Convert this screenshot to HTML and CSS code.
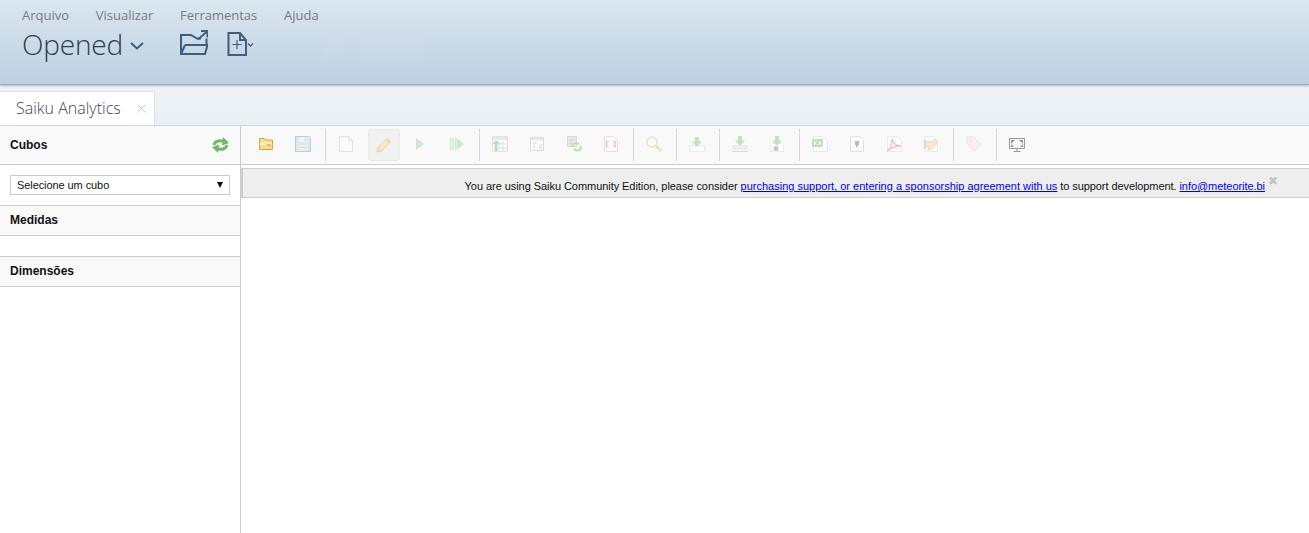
FILE: index.html
```html
<!DOCTYPE html>
<html lang="pt">
<head>
<meta charset="utf-8">
<title>Saiku Analytics</title>
<link rel="stylesheet" href="styles.css">
</head>
<body>
<header class="header">
  <nav class="menu">
    <span class="menu-item">Arquivo</span>
    <span class="menu-item">Visualizar</span>
    <span class="menu-item">Ferramentas</span>
    <span class="menu-item">Ajuda</span>
  </nav>
  <div class="title-row">
    <span class="doc-title">Opened</span>
    <svg class="chev" width="14" height="8" viewBox="0 0 14 8"><path d="M1 1l6 5.500L13 1" fill="none" stroke="#3d5f7d" stroke-width="2"/></svg>
    <svg class="open-icon" width="28" height="25" viewBox="0 0 28 25"><path d="M1 24V5h10l6 3.500h4M26.500 8.500V15M5 15h22.500L25 24H1L5 15" fill="none" stroke="#3d5f7d" stroke-width="2"/><path d="M18 9.500L27 1.500M21 1h6.500v6.500" fill="none" stroke="#3d5f7d" stroke-width="2"/></svg>
    <svg class="new-icon" width="27" height="24" viewBox="0 0 27 24"><path d="M1.500 1H13l6 7v15H1.500zM13 1v7h6" fill="none" stroke="#3d5f7d" stroke-width="2"/><path d="M5.500 12.500h9M10 8v9" fill="none" stroke="#3d5f7d" stroke-width="1.200"/><path d="M21 11.500l2.500 2.500 2.500-2.500" fill="none" stroke="#3d5f7d" stroke-width="1.300"/></svg>
  </div>
  <svg class="ghost" width="110" height="30" viewBox="0 0 110 30"><path d="M0 30L18 4l10 8-16 18zM44 6h62v24H44z" fill="#fff"/></svg>
</header>
<div class="tabs">
  <div class="tab"><span class="tab-label">Saiku Analytics</span><svg width="9" height="9" viewBox="0 0 9 9"><path d="M.500.500l8 8M8.500.500l-8 8" stroke="#c8ccd0"/></svg></div>
</div>
<main class="main">
  <aside class="sidebar">
    <div class="side-head cubes-head">
      <span>Cubos</span>
      <svg class="refresh" width="17" height="16" viewBox="0 0 17 16"><path d="M2 8C3 3.500 8 3 12 4.500" fill="none" stroke="#72b86c" stroke-width="3"/><path d="M11 0L17 6 10 8.500z" fill="#72b86c"/><g transform="rotate(180 8.500 8)"><path d="M2 8C3 3.500 8 3 12 4.500" fill="none" stroke="#72b86c" stroke-width="3"/><path d="M11 0L17 6 10 8.500z" fill="#72b86c"/></g></svg>
    </div>
    <div class="cube-box">
      <div class="cube-select"><span>Selecione um cubo</span><i class="cube-arrow"></i></div>
    </div>
    <div class="side-head"><span class="side-title">Medidas</span></div>
    <div class="side-gap"></div>
    <div class="side-head"><span class="side-title">Dimensões</span></div>
  </aside>
  <section class="workspace">
    <div class="toolbar">
      <span class="btn live"><svg width="14" height="12" viewBox="0 0 14 12"><path d="M.500 11.500V.500h5l1.500 1.500h6.500v9.500z" fill="#f6dc8c" stroke="#d8a544"/><path d="M1 4.500h12V7H1z" fill="#fff3c4"/><path d="M8 6h4v2H8z" fill="#e7bb55"/></svg></span>
      <span class="btn dim"><svg width="16" height="16" viewBox="0 0 16 16"><path d="M.500.500h13l2 2v13H.500z" fill="#c9d6ee" stroke="#7e9ccd"/><path d="M4 1h8v5H4z" fill="#eef2fa"/><path d="M9.500 2h1.500v3H9.500z" fill="#9db4da"/><path d="M3 9h10v6H3z" fill="#e2ebc8"/><path d="M4 11h8v1H4z" fill="#b8c8a0"/></svg></span>
      <i class="sep"></i>
      <span class="btn faint"><svg width="14" height="16" viewBox="0 0 14 16"><path d="M.500.500h9l4 4v11H.500zM9.500.500v4h4" fill="#fff" stroke="#bbb"/></svg></span>
      <span class="btn active"><svg width="16" height="16" viewBox="0 0 16 16"><path d="M1 15l1.200-4.500L11 1.500 14.500 5l-9 9z" fill="#f8e8b4" stroke="#e3c49a"/><path d="M11 1.500L14.500 5l-1.500 1.500L9.500 3z" fill="#f0c9a0"/><path d="M1 15l1.200-4.500 3.300 3.500z" fill="#eccfb0"/></svg></span>
      <span class="btn dim"><svg width="8" height="12" viewBox="0 0 8 12"><path d="M0 0l8 6-8 6z" fill="#a9dba4"/></svg></span>
      <span class="btn dim"><svg width="14" height="12" viewBox="0 0 14 12"><path d="M0 0h1.500v12H0zM2.500 0H4v12H2.500zM5 0h1.500v12H5zM7 0l7 6-7 6z" fill="#a9dba4"/></svg></span>
      <i class="sep"></i>
      <span class="btn dim"><svg width="16" height="16" viewBox="0 0 16 16"><path d="M.500.500h15v15H.500z" fill="#fff" stroke="#c8c8c8"/><path d="M1 1h14v3H1z" fill="#d8d8d8"/><path d="M7 5v10M11 5v10M7 8h8M7 12h8" fill="none" stroke="#ccc"/><path d="M4 15V7" fill="none" stroke="#7dc87a" stroke-width="3"/><path d="M0 8l4-4 4 4z" fill="#7dc87a"/></svg></span>
      <span class="btn faint"><svg width="14" height="14" viewBox="0 0 14 14"><path d="M.500.500h13v13H.500z" fill="#fff" stroke="#aaa"/><path d="M1 1h12v2.500H1z" fill="#ccc"/><path d="M3 6h4M4 6v6M9 7l3 5M12 7l-3 5" stroke="#aaa" fill="none"/></svg></span>
      <span class="btn dim"><svg width="15" height="16" viewBox="0 0 15 16"><path d="M.500.500h9v10h-9z" fill="#ddd" stroke="#bbb"/><path d="M2 4h6M2 7h4" stroke="#aaa"/><path d="M5 11a4 4 0 0 1 7-2.500M14 10a4 4 0 0 1-7 3" fill="none" stroke="#7dc87a" stroke-width="2"/></svg></span>
      <span class="btn faint"><svg width="14" height="16" viewBox="0 0 14 16"><path d="M.500.500h9l4 4v11H.500z" fill="#fff" stroke="#bbb"/><path d="M4.500 5.500H2.500v5h2M9 5.500h2v5H9" fill="none" stroke="#e66" stroke-width="1.500"/></svg></span>
      <i class="sep"></i>
      <span class="btn dim"><svg width="16" height="16" viewBox="0 0 16 16"><circle cx="6" cy="6" r="5" fill="#fdf9ee" stroke="#e0c8a8" stroke-width="1.500"/><path d="M10 10l5 5" stroke="#d8c4a8" stroke-width="2.500"/></svg></span>
      <i class="sep"></i>
      <span class="btn dim"><svg width="16" height="15" viewBox="0 0 16 15"><path d="M.500 8.500h15v6H.500z" fill="#fff" stroke="#ddd"/><path d="M6 0h4v4.500h3L8 10 3 4.500h3z" fill="#8ccf87"/></svg></span>
      <i class="sep"></i>
      <span class="btn dim"><svg width="16" height="16" viewBox="0 0 16 16"><path d="M0 15.500h16" stroke="#bbb"/><path d="M1 10h14v3H1z" fill="#ececec" stroke="#ccc"/><path d="M6 0h4v4.500h3L8 10 3 4.500h3z" fill="#8ccf87"/></svg></span>
      <span class="btn dim"><svg width="14" height="16" viewBox="0 0 14 16"><path d="M.500 9.500l2-2h9l2 2v6H.500z" fill="#fff" stroke="#ddd"/><path d="M5 0h4v4.500h3L7 10 2 4.500h3z" fill="#8ccf87"/><circle cx="6" cy="12.500" r="2.500" fill="#999"/></svg></span>
      <i class="sep"></i>
      <span class="btn dim"><svg width="16" height="16" viewBox="0 0 16 16"><path d="M1.500.500h10l4 4v11h-14z" fill="#fff" stroke="#ddd"/><path d="M0 3h11v8H0z" fill="#8bc48b"/><path d="M2 5h7v4H2z" fill="#dcefdc"/><path d="M3.500 5l4 4M7.500 5l-4 4" stroke="#6aa86a"/></svg></span>
      <span class="btn faint"><svg width="14" height="16" viewBox="0 0 14 16"><path d="M.500.500h9l4 4v11H.500z" fill="#fff" stroke="#bbb"/><path d="M5 5h4v3.500L6 12v-3H5z" fill="#555"/></svg></span>
      <span class="btn dim"><svg width="16" height="16" viewBox="0 0 16 16"><path d="M1.500.500h10l4 4v11h-14z" fill="#fff" stroke="#ddd"/><path d="M1 15c3-1.500 5-6 5-12 1 4 4 7 9 7-5 0-10 2-14 5z" fill="none" stroke="#e88" stroke-width="1.300"/></svg></span>
      <span class="btn dim"><svg width="14" height="16" viewBox="0 0 14 16"><path d="M.500.500h9l4 4v11H.500z" fill="#fff" stroke="#ddd"/><path d="M1 4v9" stroke="#f0a090" stroke-width="2"/><path d="M1 6l7 0M1 10h4" stroke="#f0a090" stroke-width="1.500"/><path d="M4 14l1-4 6-7 3 3-6 7z" fill="#f4dc90" stroke="#e6c08a"/></svg></span>
      <i class="sep"></i>
      <span class="btn dim"><svg width="16" height="16" viewBox="0 0 16 16"><path d="M1 1h6.500l7.500 7.500L8.500 15 1 7.500z" fill="#fbe8ea" stroke="#e8c4c8"/><circle cx="4.500" cy="4.500" r="1.200" fill="#fff" stroke="#e8c4c8"/></svg></span>
      <i class="sep"></i>
      <span class="btn monitor"><svg width="16" height="14" viewBox="0 0 16 14"><path d="M.500.500h15v10H.500z" fill="#f4f4f4" stroke="#999"/><path d="M2 2h4L2 6zM14 2v4l-4-4zM2 9V6l3 3zM14 9h-3l3-3z" fill="#999"/><path d="M8 11v2M4.500 13.500h7" stroke="#999"/></svg></span>
    </div>
    <div class="notice"><span class="notice-lead">You are using Saiku Community Edition, please consider </span><a href="#">purchasing support, or entering a sponsorship agreement with us</a><span class="notice-mid"> to support development. </span><a class="notice-mail" href="#">info@meteorite.bi</a><span class="notice-close">✖</span></div>
  </section>
</main>
</body>
</html>
```
FILE: styles.css
```css
* { box-sizing: border-box; }
html, body { margin: 0; height: 533px; overflow: hidden; background: #fff; }
body { font-family: "Liberation Sans", Arial, sans-serif; color: #111; }

.header { height: 85px; padding: 7px 0 0 22px; background: linear-gradient(#dbe6ef, #bdd0e2); border-bottom: 1px solid #9eacba; box-shadow: 0 1px 2px rgba(90,110,130,.45); font-family: "Open Sans", sans-serif; position: relative; }
.menu { display: flex; gap: 26.7px; font-size: 13px; line-height: 16px; color: #767b80; }
.title-row { display: flex; align-items: flex-start; margin-top: 2px; }
.doc-title { font-size: 28px; font-weight: 300; line-height: 38px; letter-spacing: -.15px; color: #2e3c4c; }
.chev { margin: 17px 0 0 7px; }
.open-icon { margin: 5px 0 0 36px; }
.new-icon { margin: 7px 0 0 19px; }
.ghost { position: absolute; left: 318px; top: 30px; opacity: .04; }

.tabs { height: 41px; padding-top: 6px; background: linear-gradient(#eff3f6, #e9eff4); border-bottom: 1px solid #c8d8e6; }
.tab { width: 155px; height: 34px; background: #fff; border: 1px solid #d6e3ef; border-bottom: 0; border-left: 0; display: flex; align-items: center; padding: 0 8px 0 16px; justify-content: space-between; font-family: "Open Sans", sans-serif; }
.tab-label { font-size: 16px; font-weight: 300; line-height: 22px; margin-bottom: 2px; color: #445; }

.main { display: flex; height: 407px; }
.sidebar { width: 241px; border-right: 1px solid #ccc; flex: none; }
.side-head { height: 31px; padding: 0 10px; display: flex; align-items: center; justify-content: space-between; background: #f9f9f9; border-top: 1px solid #ccc; border-bottom: 1px solid #ccc; font-size: 12px; font-weight: 700; }
.side-title { margin-bottom: 2px; }
.cubes-head { height: 39px; border-top: 0; }
.refresh { margin-right: 1px; }
.cube-box { height: 40px; padding: 10px; }
.cube-select { height: 20px; border: 1px solid #ccc; background: #fff; display: flex; align-items: center; justify-content: space-between; padding: 0 6px; font-size: 11px; letter-spacing: -.08px; color: #111; }
.cube-arrow { width: 0; height: 0; border: 3.5px solid transparent; border-top: 6px solid #111; border-bottom: 0; }
.side-gap { height: 20px; }

.workspace { flex: 1; min-width: 0; }
.toolbar { height: 39px; padding: 3px 0 0 9px; display: flex; gap: 5px; background: #f9f9f9; border-bottom: 1px solid #ccc; }
.btn { width: 32px; height: 32px; padding-bottom: 2px; display: flex; align-items: center; justify-content: center; border-radius: 3px; }
.btn.dim svg { opacity: .5; }
.btn.faint svg { opacity: .38; }
.btn.active { margin: 0 -1px 0 1px; background: #f1f1f1; border: 1px solid #e8e8e8; padding-bottom: 0; }
.btn.active svg { opacity: .75; }
.btn.monitor { padding-bottom: 0; }
.sep { width: 1px; height: 32px; background: #d5d5d5; margin: 0 -1px 0 1px; }
.notice { position: relative; height: 30px; margin-top: 3px; background: #eee; border-top: 1px solid #ccc; border-bottom: 1px solid #ccc; border-left: 2px solid #ccc; font-size: 11px; line-height: 35px; text-align: right; padding-right: 44px; color: #111; white-space: nowrap; }
.notice-lead { letter-spacing: -.055px; }
.notice-mid { letter-spacing: -.08px; }
.notice-mail { letter-spacing: -.05px; }
.notice-close { position: absolute; right: 31px; top: 0; line-height: 24px; font-size: 12px; color: #c4c4c4; }
```
